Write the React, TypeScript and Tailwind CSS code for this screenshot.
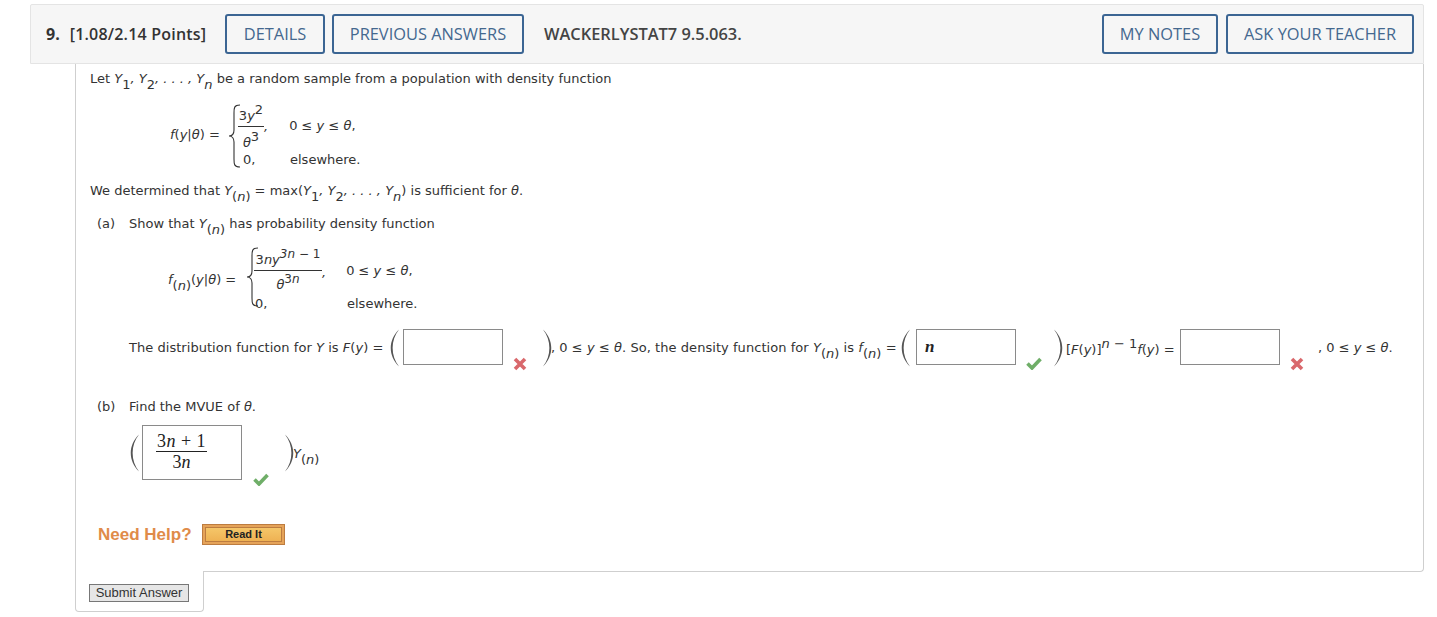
const Brace = ({ h }: { h: number }) => (
  <svg width="14" height={h} viewBox={`0 0 14 ${h}`} fill="none" stroke="#333" strokeWidth="1.1" className="shrink-0">
    <path d={`M13 1 C7 1 7 4 7 9 L7 ${h / 2 - 6} C7 ${h / 2 - 2} 5 ${h / 2} 2 ${h / 2} C5 ${h / 2} 7 ${h / 2 + 2} 7 ${h / 2 + 6} L7 ${h - 9} C7 ${h - 4} 7 ${h - 1} 13 ${h - 1}`} />
  </svg>
);

const Paren = ({ right, h = 38 }: { right?: boolean; h?: number }) => (
  <svg width="12" height={h} viewBox={`0 0 12 ${h}`} fill="#555" className="shrink-0">
    <path
      d={
        right
          ? `M2 0.5 C13 ${h * 0.3} 13 ${h * 0.7} 2 ${h - 0.5} C10.5 ${h * 0.7} 10.5 ${h * 0.3} 2 0.5 Z`
          : `M10 0.5 C-1 ${h * 0.3} -1 ${h * 0.7} 10 ${h - 0.5} C1.5 ${h * 0.7} 1.5 ${h * 0.3} 10 0.5 Z`
      }
    />
  </svg>
);

const Cross = () => (
  <svg width="14" height="14" viewBox="0 0 14 14" className="shrink-0">
    <path d="M2 2 L12 12 M12 2 L2 12" stroke="#d9686c" strokeWidth="3.6" strokeLinecap="butt" />
  </svg>
);

const Check = () => (
  <svg width="16" height="13" viewBox="0 0 16 13" className="shrink-0">
    <path d="M1.5 6.5 L6 11 L14.5 2" fill="none" stroke="#6fae68" strokeWidth="3.6" />
  </svg>
);

const I = ({ children }: { children: React.ReactNode }) => <span className="italic">{children}</span>;
const Sub = ({ children }: { children: React.ReactNode }) => <span className="align-[-6px] leading-none">{children}</span>;
const Sup = ({ children }: { children: React.ReactNode }) => <span className="align-[6px] leading-none">{children}</span>;

const Box = ({ w = 100, h = 36, children }: { w?: number; h?: number; children?: React.ReactNode }) => (
  <div
    style={{ width: w, height: h }}
    className="shrink-0 border border-[#8a8a8a] bg-white flex items-center justify-start pl-[8px] font-['Liberation_Serif',serif] text-[#222]"
  >
    {children}
  </div>
);

const HeadBtn = ({ children, w }: { children: React.ReactNode; w: number }) => (
  <div
    style={{ width: w }}
    className="h-[40px] shrink-0 flex items-center justify-center rounded-[3px] border-2 border-[#3b6593] text-[#44688f] text-[16.4px]"
  >
    {children}
  </div>
);

export default function App() {
  return (
    <div className="w-[1437px] h-[617px] overflow-hidden bg-white pl-[30px] pt-[4px] font-['DejaVu_Sans',sans-serif] text-[13px] text-[#333]">
      <div className="w-[1394px] h-[60px] bg-[#f6f6f6] border border-[#e4e4e4] rounded-t-[2px] flex items-center pl-[15px] pr-[9px] font-['Open_Sans',sans-serif]">
        <div className="w-[179px] shrink-0 text-[16px] font-semibold text-[#333] whitespace-nowrap">
          <span className="font-bold">9.</span>
          <span className="ml-[10px] tracking-[0.2px]">[1.08/2.14 Points]</span>
        </div>
        <HeadBtn w={100}>DETAILS</HeadBtn>
        <div className="w-[7px]" />
        <HeadBtn w={192}>PREVIOUS ANSWERS</HeadBtn>
        <div className="ml-[20px] text-[16.4px] font-semibold text-[#444]">WACKERLYSTAT7 9.5.063.</div>
        <div className="flex-1" />
        <HeadBtn w={116}>MY NOTES</HeadBtn>
        <div className="w-[8px]" />
        <HeadBtn w={188}>ASK YOUR TEACHER</HeadBtn>
      </div>

      <div className="ml-[45px] w-[1349px]">
        <div className="h-[508px] border-x border-b border-[#cfcfcf] rounded-br-[4px] pt-[4px]">
          <div className="h-[20px] pt-[1px] pl-[14px] whitespace-nowrap leading-[20px]">
            Let <I>Y</I><Sub>1</Sub><I>,</I> <I>Y</I><Sub>2</Sub><I>,</I> <I>. . . ,</I> <I>Y</I><Sub><I>n</I></Sub> be a random sample from a population with density function
          </div>

          <div className="mt-[15px] h-[66px] pl-[94px] flex items-center whitespace-nowrap">
            <span className="w-[57px] shrink-0 mb-[2px]"><I>f</I>(<I>y</I>|<I>θ</I>) =</span>
            <Brace h={64} />
            <div className="h-full flex flex-col ml-[-3px]">
              <div className="h-[47px] flex items-start">
                <div className="w-[26px] flex flex-col items-center">
                  <span className="h-[24px] border-b border-[#333] w-full flex items-center justify-center"><span>3<I>y</I><Sup>2</Sup></span></span>
                  <span className="h-[29px] flex items-center"><span><I>θ</I><Sup>3</Sup></span></span>
                </div>
                <span className="mt-[14px] leading-[20px] italic">,</span>
                <span className="ml-[21px] mt-[13px] leading-[20px]">0 ≤ <I>y</I> ≤ <I>θ</I>,</span>
              </div>
              <div className="h-[20px] flex items-center">
                <span className="w-[52px] pl-[5px]">0,</span>
                <span>elsewhere.</span>
              </div>
            </div>
          </div>

          <div className="mt-[11px] h-[20px] pt-[1px] pl-[14px] whitespace-nowrap leading-[20px]">
            We determined that <I>Y</I><Sub>(<I>n</I>)</Sub> = max(<I>Y</I><Sub>1</Sub><I>,</I> <I>Y</I><Sub>2</Sub><I>,</I> <I>. . . ,</I> <I>Y</I><Sub><I>n</I></Sub>) is sufficient for <I>θ</I>.
          </div>

          <div className="mt-[13px] h-[20px] pt-[1px] pl-[21px] flex whitespace-nowrap leading-[20px]">
            <span className="w-[32px]">(a)</span>
            <span>Show that <I>Y</I><Sub>(<I>n</I>)</Sub> has probability density function</span>
          </div>

          <div className="mt-[13px] h-[62px] pl-[92px] flex items-center whitespace-nowrap">
            <span className="w-[77px] shrink-0 mt-[8px]"><I>f</I><Sub>(<I>n</I>)</Sub>(<I>y</I>|<I>θ</I>) =</span>
            <Brace h={60} />
            <div className="h-full flex flex-col ml-[-5px]">
              <div className="h-[50px] flex items-start">
                <div className="w-[68px] flex flex-col items-center">
                  <span className="h-[25px] border-b border-[#333] w-full flex items-center justify-center"><span>3<I>ny</I><Sup><span className="text-[12px]"><I>3n</I> − 1</span></Sup></span></span>
                  <span className="h-[25px] flex items-center"><span><I>θ</I><Sup><span className="text-[12px]">3<I>n</I></span></Sup></span></span>
                </div>
                <span className="mt-[17px] leading-[20px] italic">,</span>
                <span className="ml-[20px] mt-[15px] leading-[20px]">0 ≤ <I>y</I> ≤ <I>θ</I>,</span>
              </div>
              <div className="h-[16px] flex items-center">
                <span className="w-[93px] pl-[1px]">0,</span>
                <span>elsewhere.</span>
              </div>
            </div>
          </div>

          <div className="mt-[21px] h-[36px] pl-[53px] flex items-center whitespace-nowrap">
            <span className="w-[260px] shrink-0 mt-[2px] tracking-[0.04px]">The distribution function for <I>Y</I> is <I>F</I>(<I>y</I>) =</span>
            <div className="mt-[2px]"><Paren /></div>
            <div className="ml-[2px]"><Box /></div>
            <div className="ml-[10px] mt-[34px]"><Cross /></div>
            <div className="ml-[14px] mt-[2px]"><Paren right /></div>
            <span className="w-[349px] shrink-0 ml-[-2px] mt-[4px] tracking-[0.05px]">, 0 ≤ <I>y</I> ≤ <I>θ</I>. So, the density function for <I>Y</I><Sub>(<I>n</I>)</Sub> is <I>f</I><Sub>(<I>n</I>)</Sub> =</span>
            <div className="mt-[2px]"><Paren /></div>
            <div className="ml-[4px]"><Box><span className="italic font-bold text-[17px]">n</span></Box></div>
            <div className="ml-[10px] mt-[33px]"><Check /></div>
            <div className="ml-[10px] mt-[2px]"><Paren right /></div>
            <span className="w-[114px] shrink-0 ml-[2px] mt-[2px]">[<I>F</I>(<I>y</I>)]<Sup><I>n</I> − 1</Sup><I>f</I>(<I>y</I>) =</span>
            <Box />
            <div className="ml-[10px] mt-[34px]"><Cross /></div>
            <span className="ml-[14px] mt-[2px]">, 0 ≤ <I>y</I> ≤ <I>θ</I>.</span>
          </div>

          <div className="mt-[31px] h-[20px] pt-[1px] pl-[21px] flex whitespace-nowrap leading-[20px]">
            <span className="w-[32px]">(b)</span>
            <span>Find the MVUE of <I>θ</I>.</span>
          </div>

          <div className="mt-[9px] h-[55px] pl-[53px] flex items-start whitespace-nowrap">
            <div className="mt-[9px]"><Paren /></div>
            <div className="w-[100px] h-[55px] ml-[1px] border border-[#8a8a8a] flex items-start pt-[5px] pl-[13px] font-['Liberation_Serif',serif] text-[18px] text-[#222]">
              <div className="flex flex-col items-center leading-[20px] w-[51px]">
                <span className="border-b border-[#222] w-full text-center whitespace-pre tracking-[0.5px]">3<I>n</I> + 1</span>
                <span>3<I>n</I></span>
              </div>
            </div>
            <div className="ml-[11px] mt-[48px]"><Check /></div>
            <div className="ml-[14px] mt-[9px]"><Paren right /></div>
            <span className="mt-[19px] ml-[-2px]"><I>Y</I><Sub>(<I>n</I>)</Sub></span>
          </div>

          <div className="mt-[44px] h-[21px] pl-[22px] flex items-center">
            <span className="font-['Liberation_Sans',sans-serif] font-bold text-[17px] text-[#e08b49] w-[104px]">Need Help?</span>
            <div className="w-[83px] h-[21px] border border-[#bd7c40] bg-[#e5a359] p-[2px]">
              <div className="h-full border border-[#bd7c40] bg-gradient-to-b from-[#f5c669] to-[#eeb253] flex items-center justify-center font-['Liberation_Sans',sans-serif] font-bold text-[11px] text-[#222]">
                Read It
              </div>
            </div>
          </div>
        </div>

        <div className="relative -mt-px w-[129px] h-[41px] bg-white border-x border-b border-[#cfcfcf] rounded-b-[4px] pt-[13px] pl-[13px]">
          <div className="w-[100px] h-[18px] border border-[#777] bg-[#e6e6e6] flex items-center justify-center font-['Liberation_Sans',sans-serif] text-[13px] text-[#333]">
            Submit Answer
          </div>
        </div>
      </div>
    </div>
  );
}
